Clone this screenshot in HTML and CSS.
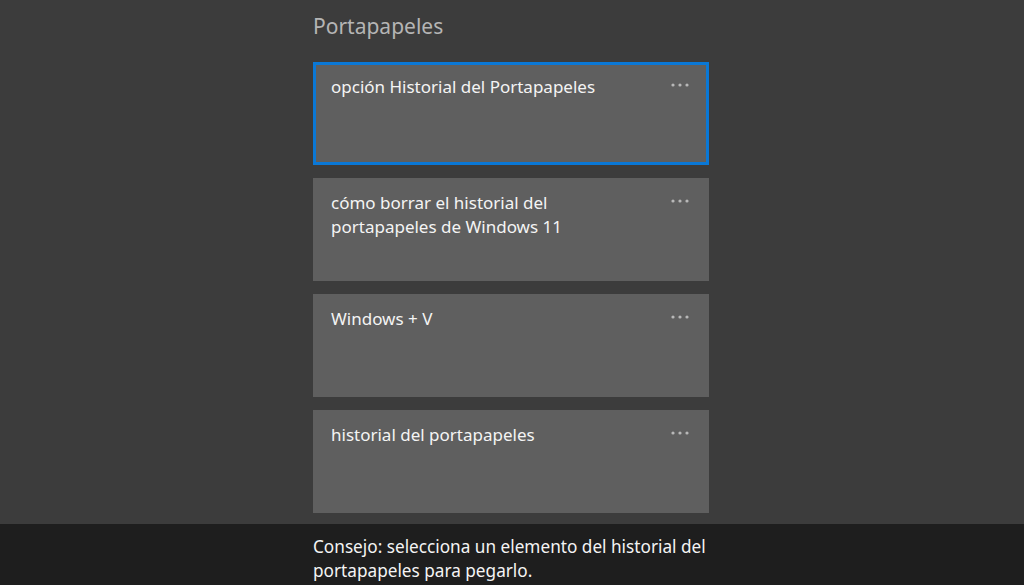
FILE: index.html
```html
<!DOCTYPE html>
<html lang="es">
<head>
<meta charset="utf-8">
<link rel="stylesheet" href="styles.css">
</head>
<body>
<div class="page">
  <main class="panel">
    <h1 class="title">Portapapeles</h1>
    <ul class="list">
      <li class="card selected">
        <span class="card-text">opción Historial del Portapapeles</span>
        <svg class="more" width="20" height="6" viewBox="0 0 20 6"><circle cx="3" cy="3" r="1.6"/><circle cx="10" cy="3" r="1.6"/><circle cx="17" cy="3" r="1.6"/></svg>
      </li>
      <li class="card">
        <span class="card-text">cómo borrar el historial del<br>portapapeles de Windows 11</span>
        <svg class="more" width="20" height="6" viewBox="0 0 20 6"><circle cx="3" cy="3" r="1.6"/><circle cx="10" cy="3" r="1.6"/><circle cx="17" cy="3" r="1.6"/></svg>
      </li>
      <li class="card">
        <span class="card-text">Windows + V</span>
        <svg class="more" width="20" height="6" viewBox="0 0 20 6"><circle cx="3" cy="3" r="1.6"/><circle cx="10" cy="3" r="1.6"/><circle cx="17" cy="3" r="1.6"/></svg>
      </li>
      <li class="card">
        <span class="card-text">historial del portapapeles</span>
        <svg class="more" width="20" height="6" viewBox="0 0 20 6"><circle cx="3" cy="3" r="1.6"/><circle cx="10" cy="3" r="1.6"/><circle cx="17" cy="3" r="1.6"/></svg>
      </li>
    </ul>
  </main>
  <footer class="tip">
    <p class="tip-text">Consejo: selecciona un elemento del historial del<br>portapapeles para pegarlo.</p>
  </footer>
</div>
</body>
</html>
```

FILE: styles.css
```css
html, body {
  margin: 0;
  padding: 0;
  background: #3c3c3c;
  font-family: "Noto Sans", "Open Sans", sans-serif;
}
.page {
  width: 1024px;
  height: 585px;
  display: flex;
  flex-direction: column;
  overflow: hidden;
}
.panel {
  flex: 1;
  padding: 10px 0 0 313px;
}
.title {
  margin: 0;
  font-weight: 400;
  font-size: 21px;
  line-height: 32px;
  color: #b5b5b5;
  height: 52px;
}
.list {
  list-style: none;
  margin: 0;
  padding: 0;
  width: 396px;
  display: flex;
  flex-direction: column;
  gap: 13px;
}
.card {
  box-sizing: border-box;
  height: 103px;
  background: #5f5f5f;
  padding: 13px 19px 0 18px;
  display: flex;
  justify-content: space-between;
  align-items: flex-start;
}
.card.selected {
  border: 3px solid #0a78d6;
  padding: 10px 16px 0 15px;
}
.card-text {
  color: #f4f4f4;
  font-size: 17px;
  line-height: 24px;
}
.more {
  fill: #b8b8b8;
  margin-top: 7px;
  flex: none;
}
.tip {
  height: 61px;
  background: #1e1e1e;
  padding: 0 0 0 313px;
  box-sizing: border-box;
}
.tip-text {
  margin: 0;
  padding-top: 11px;
  color: #f4f4f4;
  font-size: 17.2px;
  line-height: 24px;
}
```
